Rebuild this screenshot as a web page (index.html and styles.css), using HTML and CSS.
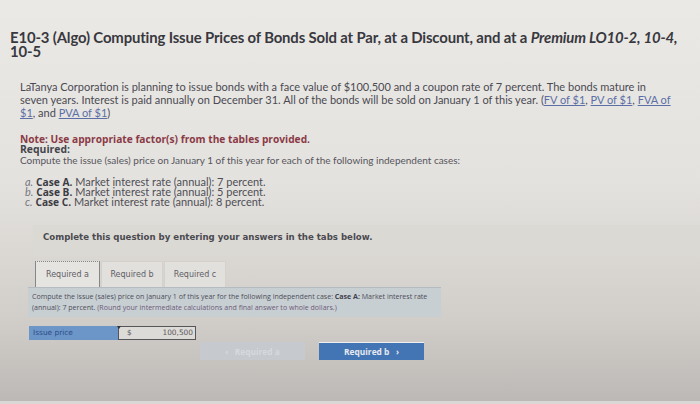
FILE: index.html
```html
<!DOCTYPE html>
<html lang="en">
<head>
  <meta charset="UTF-8">
  <title>E10-3 (Algo) Computing Issue Prices of Bonds</title>
  <link rel="stylesheet" href="styles.css">
</head>
<body>
  <h1 class="title">E10-3 (Algo) Computing Issue Prices of Bonds Sold at Par, at a Discount, and at a <i>Premium LO10-2, <span class="nowrap">10-4,</span></i> <span class="nowrap">10-5</span></h1>

  <p class="intro">LaTanya Corporation is planning to issue bonds with a face value of $100,500 and a coupon rate of 7 percent. The bonds mature in seven years. Interest is paid annually on December 31. All of the bonds will be sold on January 1 of this year. (<a href="#">FV of $1</a>, <a href="#">PV of $1</a>, <a href="#">FVA of $1</a>, and <a href="#">PVA of $1</a>)</p>

  <div class="note">Note: Use appropriate factor(s) from the tables provided.</div>
  <div class="required">Required:</div>
  <div class="compute">Compute the issue (sales) price on January 1 of this year for each of the following independent cases:</div>

  <ul class="cases">
    <li><span class="letter">a.</span> <b>Case A.</b> Market interest rate (annual): 7 percent.</li>
    <li><span class="letter">b.</span> <b>Case B.</b> Market interest rate (annual): 5 percent.</li>
    <li><span class="letter">c.</span> <b>Case C.</b> Market interest rate (annual): 8 percent.</li>
  </ul>

  <div class="complete">Complete this question by entering your answers in the tabs below.</div>

  <div class="tabs">
    <div class="tab active">Required a</div>
    <div class="tab">Required b</div>
    <div class="tab">Required c</div>
  </div>

  <div class="panel">
    Compute the issue (sales) price on January 1 of this year for the following independent case: <b>Case A:</b> Market interest rate (annual): 7 percent. <span class="hint">(Round your intermediate calculations and final answer to whole dollars.)</span>
  </div>

  <div class="answer">
    <div class="answer-label">Issue price</div>
    <div class="answer-input"><span>$</span><span>100,500</span></div>
  </div>

  <div class="nav">
    <button type="button" class="nav-btn disabled">&lsaquo;&nbsp;&nbsp; Required a</button>
    <button type="button" class="nav-btn">Required b &nbsp;&nbsp;&rsaquo;</button>
  </div>

  <div class="bottom"></div>
</body>
</html>
```

FILE: styles.css
```css
/* page */
html, body {
  height: 100%;
}
body {
  margin: 0;
  padding: 0;
  font-family: Lato, "Open Sans", sans-serif;
  color: #3d3d44;
  background: linear-gradient(180deg, #ebe9e6 0%, #e4e2de 45%, #d2cfcb 78%, #bcb8b5 100%);
  position: relative;
  overflow: hidden;
}

.title {
  margin: 0;
  padding: 30px 0 0 10px;
  width: 685px;
  font-size: 14.9px;
  line-height: 14px;
  font-weight: 700;
  color: #38383e;
  letter-spacing: -0.15px;
}
.nowrap {
  white-space: nowrap;
}

.intro {
  margin: 22px 0 0 20px;
  width: 655px;
  font-size: 11px;
  line-height: 13px;
  color: #4a4a52;
}
.intro a {
  color: #5b6fa6;
}

.note {
  margin-top: 15px;
  padding-left: 20px;
  font-family: "Open Sans", sans-serif;
  font-size: 10.2px;
  font-weight: 700;
  color: #8a3a46;
  line-height: 10px;
}
.required {
  padding-left: 20px;
  font-family: "Open Sans", sans-serif;
  font-size: 10.4px;
  font-weight: 700;
  color: #44444c;
  line-height: 11px;
}
.compute {
  padding-left: 20px;
  font-size: 10px;
  color: #55555d;
  line-height: 11px;
}

/* list of cases */
.cases {
  list-style: none;
  margin: 11px 0 0 25px;
  padding: 0;
  font-size: 11px;
  line-height: 10px;
  color: #4e4e56;
}
.cases .letter {
  font-style: italic;
  color: #77777f;
}
.cases b {
  font-family: "Open Sans", sans-serif;
  font-size: 10.2px;
  color: #3c3c44;
}

/* question box */
.complete {
  margin: 18px 0 0 33px;
  padding: 7px 10px 13px 10px;
  background-color: #dbd9d4;
  font-family: "DejaVu Sans", Verdana, sans-serif;
  font-size: 8.6px;
  line-height: 11px;
  font-weight: 700;
  color: #4a4a50;
}

.tabs {
  display: flex;
  margin: 5px 0 0 35px;
  gap: 1px;
}
.tab {
  width: 62px;
  height: 26px;
  display: flex;
  align-items: center;
  justify-content: center;
  border: 1px solid #d3d1cc;
  border-bottom: none;
  background-color: #e2e0dc;
  font-family: "DejaVu Sans", Verdana, sans-serif;
  font-size: 8px;
  color: #5e5e66;
  box-sizing: border-box;
}
.tab.active {
  width: 65px;
  border: 1px solid #85858a;
  border-bottom: none;
  border-top-style: dotted;
  background-color: #e6e4e0;
}

.panel {
  margin-left: 28px;
  width: 413px;
  height: 30px;
  padding: 3px 10px 0 4px;
  box-sizing: border-box;
  background-color: #c8cfd3;
  border-top: 1px solid #b4bcc2;
  font-family: "Open Sans", sans-serif;
  font-size: 7.05px;
  line-height: 11px;
  color: #4d4d58;
}
.panel b {
  color: #40404a;
}
.hint {
  color: #6e5a78;
}

/* answer row */
.answer {
  display: flex;
  margin: 9px 0 0 29px;
  height: 14px;
}
.answer-label {
  width: 85px;
  padding-left: 4px;
  background-color: #6d96c8;
  font-family: "DejaVu Sans", Verdana, sans-serif;
  font-size: 7.4px;
  line-height: 14px;
  color: #2c4c86;
}
.answer-input {
  position: relative;
  width: 66px;
  display: flex;
  justify-content: space-between;
  padding: 0 2px 0 8px;
  border: 1px solid #55555a;
  background-color: #dddbd7;
  font-family: "DejaVu Sans", Verdana, sans-serif;
  font-size: 7.4px;
  line-height: 12px;
  color: #5a5a60;
}
.answer-input::before {
  content: "";
  position: absolute;
  left: -2px;
  top: -1px;
  border-left: 2px solid transparent;
  border-right: 2px solid transparent;
  border-top: 3px solid #333;
}

/* buttons */
.nav {
  display: flex;
  gap: 14px;
  margin: 2px 0 0 200px;
}
.nav-btn {
  width: 105px;
  height: 18px;
  border: none;
  padding: 0;
  font-family: "Open Sans", sans-serif;
  font-size: 8.4px;
  font-weight: 700;
  color: #e6e9ef;
  background-color: #4374b3;
  border-top: 1px solid #f0f0f0;
}
.nav-btn.disabled {
  background-color: #c6c9ce;
  color: #d6d9de;
  border-top: none;
}

.bottom {
  position: absolute;
  left: 0;
  right: 0;
  bottom: 0;
  height: 3px;
  background-color: #d9d8d5;
}
```
